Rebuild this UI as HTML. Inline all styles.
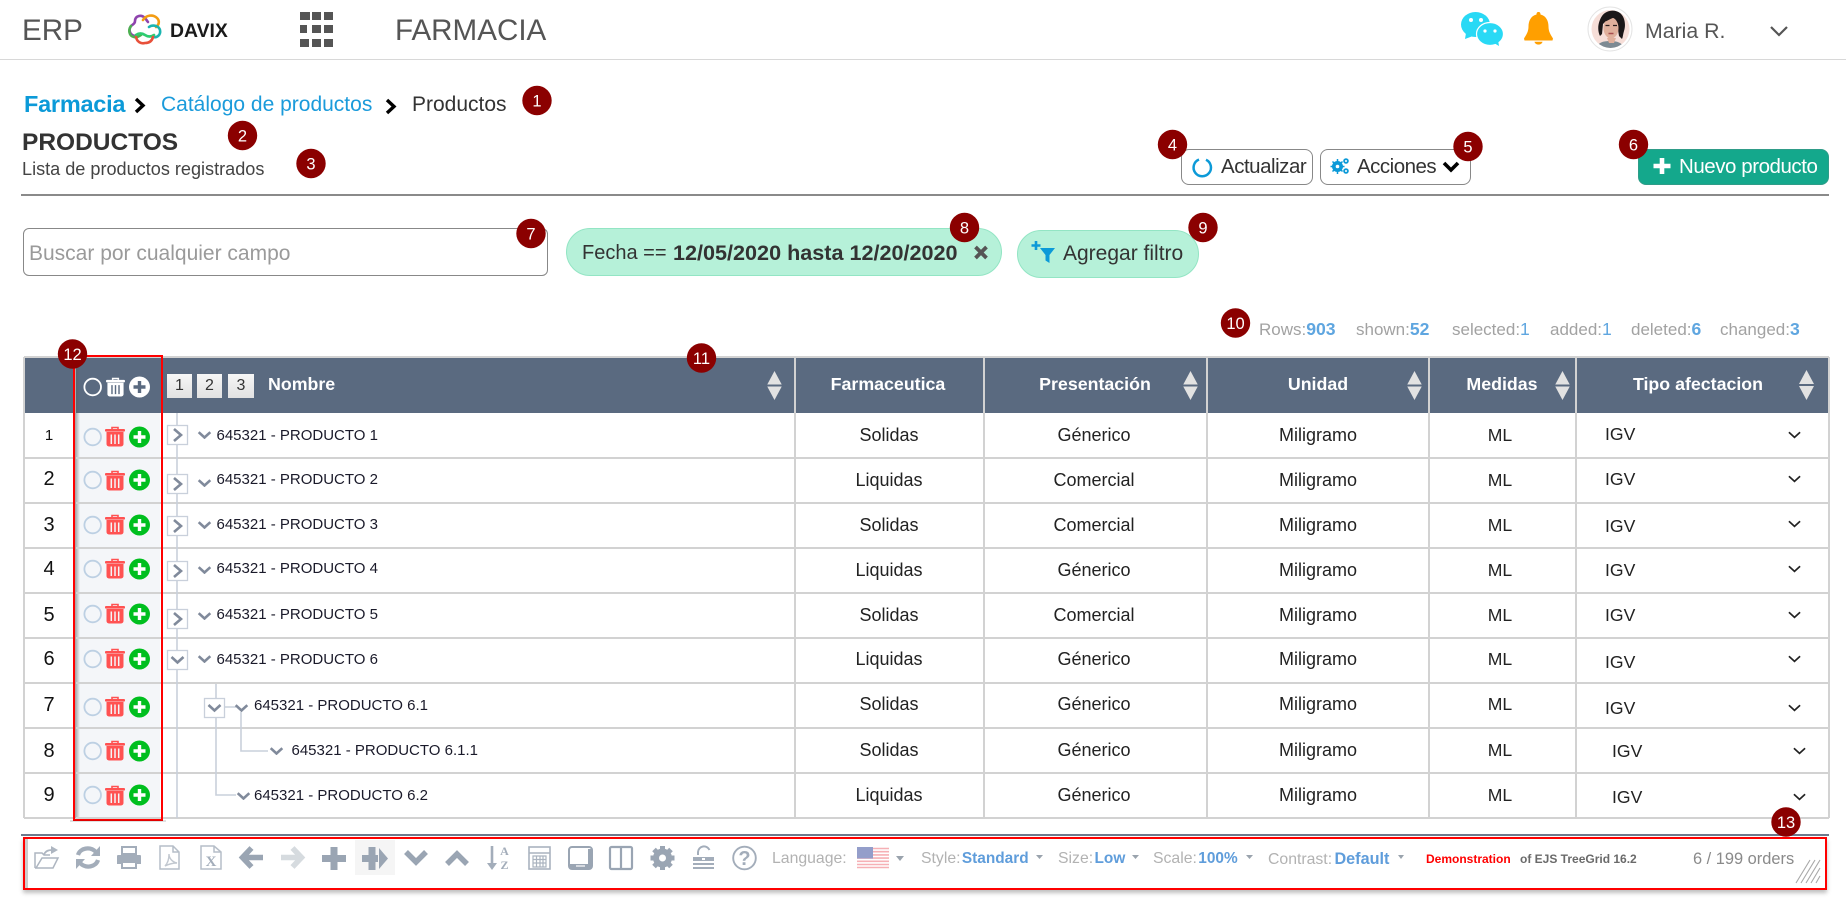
<!DOCTYPE html>
<html lang="es"><head><meta charset="utf-8"><title>Productos</title>
<style>
html,body{margin:0;padding:0;background:#fff}
#p{position:relative;width:1846px;height:898px;overflow:hidden;background:#fff;font-family:"Liberation Sans",sans-serif;color:#222}
.t{position:absolute;white-space:nowrap;line-height:20px;height:20px}
.n{width:60px;left:19px;text-align:center;font-size:20px;color:#111}
.f{width:180px;left:799px;text-align:center;font-size:18px;color:#222}
.g{width:200px;left:994px;text-align:center;font-size:18px;color:#222}
.u{width:200px;left:1218px;text-align:center;font-size:18px;color:#222}
.m{width:140px;left:1430px;text-align:center;font-size:17.6px;color:#222}
.i{left:1605px;font-size:17.6px;color:#222}
.r{font-size:15px;color:#1a1a2a}
.h{color:#fff;font-weight:bold;font-size:17.8px;text-align:center}
.b{position:absolute;box-sizing:border-box;top:149px;height:36px;border:1.3px solid #888;border-radius:8px;background:#fff}
.s{font-size:17px;color:#a2a2a2}
.s b{color:#5fa6e0;font-size:17.6px}
.l{font-size:15.8px;color:#b2b2b2}
.l b{color:#5f9ddb;font-size:15.4px}
svg{position:absolute;left:0;top:0}
</style></head><body><div id="p">

<div style="position:absolute;left:0;top:59px;width:1846px;height:1px;background:#d8d8d8"></div>
<div style="position:absolute;left:21px;top:194px;width:1808px;height:2px;background:#8a8a8a"></div>

<!-- buttons / inputs -->
<div class="b" style="left:1181px;width:132px"></div>
<div class="b" style="left:1320px;width:151px"></div>
<div class="b" style="left:1638px;width:191px;background:#14a88c;border-color:#2f9c88"></div>
<div style="position:absolute;box-sizing:border-box;left:23px;top:228px;width:525px;height:48px;border:1.4px solid #888;border-radius:6px"></div>
<div style="position:absolute;box-sizing:border-box;left:566px;top:228px;width:436px;height:48px;background:#b6f1d9;border:1.4px solid #93e5c4;border-radius:24px"></div>
<div style="position:absolute;box-sizing:border-box;left:1017px;top:230px;width:182px;height:48px;background:#b6f1d9;border:1.4px solid #93e5c4;border-radius:24px"></div>

<!-- table backgrounds -->
<div style="position:absolute;left:25px;top:358px;width:1803px;height:55px;background:#5a6a80"></div>
<div style="position:absolute;left:76px;top:413px;width:84px;height:405px;background:#f4f6f9"></div>
<div style="position:absolute;left:76px;top:358px;width:4px;height:460px;background:linear-gradient(90deg,rgba(90,90,90,.45),rgba(90,90,90,0))"></div>

<!-- toolbar -->
<div style="position:absolute;left:21px;top:834px;width:1808px;height:2px;background:#6d7a8c"></div>
<div style="position:absolute;box-sizing:border-box;left:23px;top:837px;width:1804px;height:53px;border:2px solid #f00;box-shadow:0 3px 4px rgba(0,0,0,.25);background:#fff"></div>
<div style="position:absolute;left:25px;top:839px;width:3px;height:49px;background:#ccc"></div>
<div style="position:absolute;left:355px;top:840px;width:40px;height:35px;background:#f5f5f5"></div>

<svg width="1846" height="898" viewBox="0 0 1846 898" xmlns="http://www.w3.org/2000/svg">
<defs>
<symbol id="tr" viewBox="0 0 20 20"><path d="M7 2.500V1h6v1.500" fill="none" stroke="currentColor" stroke-width="1.600"/><rect x="0" y="2.500" width="20" height="2.600" rx="1" fill="currentColor"/><path d="M1.500 5.500h17v12a2.500 2.500 0 0 1-2.500 2.500H4a2.500 2.500 0 0 1-2.500-2.500z" fill="currentColor"/><path d="M6.300 8v9.500M10 8v9.500M13.700 8v9.500" stroke="var(--s)" stroke-width="1.500"/></symbol>
<symbol id="cd" viewBox="0 0 14 8"><path d="M1.200 1.200L7 6.500l5.800-5.300" fill="none" stroke="#808a9b" stroke-width="2.600"/></symbol>
<symbol id="ch" viewBox="0 0 14 8"><path d="M1 1l6 5.600L13 1" fill="none" stroke="#222" stroke-width="1.800"/></symbol>
<symbol id="so" viewBox="0 0 15 30"><path d="M7.500 0L15 14H0zM0 16h15L7.500 30z" fill="#e2e2e2"/></symbol>
</defs>

<!-- grid -->
<g stroke="#d2d2d2" stroke-width="2" fill="none">
<path d="M24 357H1829M24 357V818M1829 357V818M24 818H1829"/>
<path d="M24 458H1829M24 503H1829M24 548H1829M24 593H1829M24 638H1829M24 683H1829M24 728H1829M24 773H1829"/>
<path d="M795 357V818M984 357V818M1207 357V818M1429 357V818M1576 357V818"/>
</g>
<path d="M75 358V818" stroke="#aaa" stroke-width="2"/>
<!-- tree lines -->
<g stroke="#c9d0db" stroke-width="1.600" fill="none">
<path d="M177 413V818M216 684V795H236M225 707H236M241 712V751H268"/>
</g>
<!-- expand boxes -->
<g fill="#fff" stroke="#c9d0db" stroke-width="1.300">
<rect x="167.500" y="425.500" width="20" height="19"/><rect x="167.500" y="474.500" width="20" height="19"/><rect x="167.500" y="516.500" width="20" height="19"/><rect x="167.500" y="561.500" width="20" height="19"/><rect x="167.500" y="609.500" width="20" height="19"/><rect x="167.500" y="650.500" width="20" height="19"/><rect x="204.500" y="698.500" width="20" height="19"/>
</g>
<g fill="none" stroke="#808a9b" stroke-width="2.600">
<path d="M174 429l7 6-7 6M174 478l7 6-7 6M174 520l7 6-7 6M174 565l7 6-7 6M174 613l7 6-7 6"/>
<path d="M171.500 657l6 5.500 6-5.500M208.500 705l6 5.500 6-5.500"/>
</g>
<!-- carets -->
<use href="#cd" x="197" y="431" width="15" height="8"/><use href="#cd" x="197" y="479" width="15" height="8"/><use href="#cd" x="197" y="521" width="15" height="8"/><use href="#cd" x="197" y="566" width="15" height="8"/><use href="#cd" x="197" y="612" width="15" height="8"/><use href="#cd" x="197" y="655" width="15" height="8"/><use href="#cd" x="234" y="704" width="15" height="8"/><use href="#cd" x="269" y="747" width="15" height="8"/><use href="#cd" x="236" y="792" width="15" height="8"/>
<!-- select chevrons -->
<use href="#ch" x="1788" y="431" width="13" height="8"/><use href="#ch" x="1788" y="475" width="13" height="8"/><use href="#ch" x="1788" y="520" width="13" height="8"/><use href="#ch" x="1788" y="565" width="13" height="8"/><use href="#ch" x="1788" y="611" width="13" height="8"/><use href="#ch" x="1788" y="655" width="13" height="8"/><use href="#ch" x="1788" y="704" width="13" height="8"/><use href="#ch" x="1793" y="747" width="13" height="8"/><use href="#ch" x="1793" y="793" width="13" height="8"/>
<!-- sort -->
<use href="#so" x="767" y="371" width="15" height="29"/><use href="#so" x="1183" y="371" width="15" height="29"/><use href="#so" x="1407" y="371" width="15" height="29"/><use href="#so" x="1555" y="371" width="15" height="29"/><use href="#so" x="1799" y="369" width="15" height="32"/>
<!-- header tree buttons -->
<defs><linearGradient id="bg" x1="0" y1="0" x2="0" y2="1"><stop offset="0" stop-color="#f6f6f6"/><stop offset="1" stop-color="#e2e2e2"/></linearGradient></defs>
<rect x="167" y="374" width="25" height="24" fill="url(#bg)"/><rect x="197" y="374" width="25" height="24" fill="url(#bg)"/><rect x="228" y="374" width="26" height="24" fill="url(#bg)"/>

<!-- col 2 icons: header -->
<circle cx="92.700" cy="387" r="8.300" fill="none" stroke="#fff" stroke-width="1.800"/>
<use href="#tr" x="106" y="377" width="19" height="20" style="color:#fff;--s:#5a6a80"/>
<circle cx="139.500" cy="387" r="10.500" fill="#fff"/><path d="M139.500 381v12M133.500 387h12" stroke="#5a6a80" stroke-width="3.400"/>
<!-- col 2 icons: rows -->
<g fill="none" stroke="#bdd0e3" stroke-width="1.800">
<circle cx="92.700" cy="437" r="8.300"/><circle cx="92.700" cy="480" r="8.300"/><circle cx="92.700" cy="525" r="8.300"/><circle cx="92.700" cy="569" r="8.300"/><circle cx="92.700" cy="614" r="8.300"/><circle cx="92.700" cy="659" r="8.300"/><circle cx="92.700" cy="707" r="8.300"/><circle cx="92.700" cy="751" r="8.300"/><circle cx="92.700" cy="795" r="8.300"/>
</g>
<g style="color:#ff5252;--s:#f4f6f9">
<use href="#tr" x="105" y="426" width="20" height="21"/><use href="#tr" x="105" y="470" width="20" height="21"/><use href="#tr" x="105" y="514" width="20" height="21"/><use href="#tr" x="105" y="558" width="20" height="21"/><use href="#tr" x="105" y="603" width="20" height="21"/><use href="#tr" x="105" y="648" width="20" height="21"/><use href="#tr" x="105" y="696" width="20" height="21"/><use href="#tr" x="105" y="740" width="20" height="21"/><use href="#tr" x="105" y="785" width="20" height="21"/>
</g>
<g fill="#00bf1f">
<circle cx="139.500" cy="437" r="10.500"/><circle cx="139.500" cy="480" r="10.500"/><circle cx="139.500" cy="525" r="10.500"/><circle cx="139.500" cy="569" r="10.500"/><circle cx="139.500" cy="614" r="10.500"/><circle cx="139.500" cy="659" r="10.500"/><circle cx="139.500" cy="707" r="10.500"/><circle cx="139.500" cy="751" r="10.500"/><circle cx="139.500" cy="795" r="10.500"/>
</g>
<path d="M139.500 431v12M133.500 437h12M139.500 474v12M133.500 480h12M139.500 519v12M133.500 525h12M139.500 563v12M133.500 569h12M139.500 608v12M133.500 614h12M139.500 653v12M133.500 659h12M139.500 701v12M133.500 707h12M139.500 745v12M133.500 751h12M139.500 789v12M133.500 795h12" stroke="#fff" stroke-width="3.400" fill="none"/>
<!-- red box 12 -->
<rect x="74" y="356" width="88" height="464" fill="none" stroke="#f00" stroke-width="2"/>
<path d="M70 821h96" stroke="#000" stroke-opacity=".12" stroke-width="2"/>

<!-- logo -->
<g fill="none" stroke-width="2.600" stroke-linecap="round">
<path d="M136 36c-6 0-8-6-5-10 2-2 4-2 4-5 0-5 6-7 10-3 1 1 2 3 3 4" stroke="#8e44ad"/>
<path d="M131 26c-3 4-2 10 3 11 3 1 5-1 7-2" stroke="#4cb050"/>
<path d="M143 20c3-5 10-6 14-2 3 3 2 7-1 9" stroke="#f39c12"/>
<path d="M149 27c4-3 10-1 11 3 1 5-3 8-7 7" stroke="#1ab5b0"/>
<path d="M136 35c3-2 6-2 9 0 3 2 6 2 9 0" stroke="#2ecc71"/>
<path d="M136 37c1 5 5 7 9 6 4 0 7-2 8-6" stroke="#e8503a"/>
</g>
<!-- apps grid -->
<g fill="#555">
<rect x="300" y="12" width="10" height="8"/><rect x="312" y="12" width="9" height="8"/><rect x="324" y="12" width="9" height="8"/>
<rect x="300" y="25" width="7" height="8"/><rect x="312" y="25" width="9" height="8"/><rect x="324" y="25" width="9" height="8"/>
<rect x="300" y="39" width="9" height="8"/><rect x="312" y="39" width="9" height="8"/><rect x="324" y="39" width="9" height="8"/>
</g>
<!-- chat -->
<ellipse cx="1475.500" cy="24.500" rx="14.500" ry="12.500" fill="#29d9f5"/><path d="M1466 33l-1 6 8-3z" fill="#29d9f5"/>
<ellipse cx="1490" cy="34" rx="13.500" ry="11.500" fill="#29d9f5" stroke="#fff" stroke-width="1.200"/><path d="M1494 43l5 3-1-6z" fill="#29d9f5"/>
<circle cx="1471" cy="20" r="2" fill="#fff"/><circle cx="1481" cy="20" r="2" fill="#fff"/><circle cx="1485" cy="31" r="1.600" fill="#fff"/><circle cx="1495" cy="31" r="1.600" fill="#fff"/>
<!-- bell -->
<path d="M1538.500 12c1.500 0 2 1 2 2.500 6 1.500 8 7 8 12 0 5 2 8 4.500 12l-.5 2h-28l-.5-2c2.500-4 4.500-7 4.500-12 0-5 2-10.500 8-12 0-1.500.5-2.500 2-2.500z" fill="#ff9f00"/>
<path d="M1534 41.500c1 4.500 8 4.500 9 0z" fill="#ff9f00" stroke="#fff" stroke-width=".6"/>
<!-- avatar -->
<circle cx="1610" cy="29" r="22" fill="#fff" stroke="#e4e4e4" stroke-width="1"/>
<clipPath id="av"><circle cx="1610.500" cy="29" r="19"/></clipPath>
<g clip-path="url(#av)">
<rect x="1590" y="9" width="42" height="40" fill="#f6ded8"/>
<path d="M1596 50c1-7 6-9 14-9s13 2 15 9z" fill="#7d8a93"/>
<path d="M1600 36c-3-6-2-14 2-20 4-6 13-7 18-3 5 4 6 12 4 18-1 3-1 6-2 8l-3-3-2-13-9-4-5 5-1 10z" fill="#1b1718"/>
<ellipse cx="1611" cy="28" rx="7.500" ry="10.500" fill="#e0b09c"/>
<path d="M1604 22c3-1 8-4 11-5l3 6-1-5-7-1-6 3z" fill="#1b1718"/>
<path d="M1605.500 25.500h4M1613 25.500h4" stroke="#2a1d1d" stroke-width="1.300"/>
<path d="M1608.500 33.500h5" stroke="#a84f50" stroke-width="1.600"/>
<path d="M1607 38l2 5h5l2-5z" fill="#e0b09c"/>
</g>
<path d="M1771 27l8 8 8-8" fill="none" stroke="#555" stroke-width="2.200"/>

<!-- breadcrumb chevrons -->
<path d="M136 99l7 6.500-7 6.500M387 100l7 6.500-7 6.500" fill="none" stroke="#000" stroke-width="3.400"/>
<!-- button icons -->
<path d="M1199 159.500a8.700 8.700 0 1 0 7 .2" fill="none" stroke="#0c9ad8" stroke-width="2.500"/>
<g fill="#0c9ad8"><circle cx="1337.500" cy="166.500" r="5.500"/><circle cx="1346" cy="161" r="2.800"/><circle cx="1346" cy="171" r="2.800"/></g>
<circle cx="1337.500" cy="166.500" r="2" fill="#fff"/><circle cx="1346" cy="161" r="1" fill="#fff"/><circle cx="1346" cy="171" r="1" fill="#fff"/>
<path d="M1337.500 159v15M1330.500 166.500h14M1332.500 161.500l10 10M1342.500 161.500l-10 10" stroke="#0c9ad8" stroke-width="1.500"/>
<circle cx="1337.500" cy="166.500" r="1.800" fill="#fff"/>
<path d="M1444 163l7 7 7-7" fill="none" stroke="#000" stroke-width="3.600"/>
<path d="M1662 158v16M1653.500 166h17" stroke="#fff" stroke-width="4.600"/>
<!-- filter pill icons -->
<path d="M975.500 247l11 11M986.500 247l-11 11" stroke="#555" stroke-width="3.800"/>
<path d="M1036 241v9M1031.500 245.500h9" stroke="#0c9ad8" stroke-width="2.600"/>
<path d="M1040 248h15l-5.500 7v8l-4-2.500v-5.500z" fill="#0c9ad8"/>

<!-- toolbar icons -->
<g fill="none" stroke="#aeb6c1" stroke-width="1.500">
<path d="M35 868v-15h7l2 2h6M35 868h18l5-10H42l-6 10"/>
<path d="M44 855c1-4 4-5 8-5" stroke-width="1.800"/>
</g>
<path d="M51 846l7 4-7 4z" fill="#aeb6c1"/>
<g fill="none" stroke="#a3adba" stroke-width="4.200">
<path d="M78 855c2-7 12-9 18-3M98 860c-2 7-12 9-18 3"/>
</g>
<path d="M100 846v10h-9zM76 869v-10h9z" fill="#a3adba"/>
<path d="M122 847h14v7h-14z" fill="none" stroke="#a3adba" stroke-width="2"/>
<path d="M118 855h22a1 1 0 0 1 1 1v8h-5v-3h-14v3h-5v-8a1 1 0 0 1 1-1z" fill="#a3adba"/>
<path d="M122 862h14v6h-14z" fill="#fff" stroke="#a3adba" stroke-width="2"/>
<g fill="none" stroke="#b6bec8" stroke-width="1.500">
<path d="M160 846h13l6 6v17h-19zM173 846v6h6"/>
<path d="M201 846h13l7 6v17h-20zM214 846v6h7"/>
</g>
<path d="M165 866c3-3 4-8 4-12 0 4 3 8 8 9-4 0-8 1-12 3z" fill="none" stroke="#c2c8d0" stroke-width="1.400"/>
<text x="211" y="866" text-anchor="middle" font-family="Liberation Serif" font-size="15" font-weight="bold" fill="#a3adba">X</text>
<path d="M251.500 848l-9 9.500 9 9.500M244 857.500h19" fill="none" stroke="#9aa5b3" stroke-width="5.500"/>
<path d="M292.500 848l9 9.500-9 9.500M300 857.500h-19" fill="none" stroke="#d6dbdf" stroke-width="5.500"/>
<path d="M334 847v23M322 858.500h24" stroke="#9aa5b3" stroke-width="7"/>
<path d="M372 847v23M362 858.500h16" stroke="#9aa5b3" stroke-width="7"/><path d="M379 848l9 10.500-9 10.500z" fill="#9aa5b3"/>
<path d="M406 852l10 10 10-10" fill="none" stroke="#9aa5b3" stroke-width="5.500"/>
<path d="M447 864l10-10 10 10" fill="none" stroke="#9aa5b3" stroke-width="5.500"/>
<path d="M492 846v20" stroke="#a3adba" stroke-width="2.600"/><path d="M487 863h10l-5 7z" fill="#a3adba"/>
<text x="504.500" y="855" text-anchor="middle" font-family="Liberation Serif" font-size="12" font-weight="bold" fill="#a3adba">A</text>
<text x="504.500" y="869" text-anchor="middle" font-family="Liberation Serif" font-size="12" font-weight="bold" fill="#a3adba">Z</text>
<rect x="529" y="847" width="21" height="22" fill="none" stroke="#aab3bf" stroke-width="1.600"/>
<path d="M529 853h21" stroke="#aab3bf" stroke-width="1.600"/>
<path d="M533 856h13v11h-13zM533 859.500h13M533 863h13M536.500 856v11M540 856v11M543 856v11" fill="none" stroke="#aab3bf" stroke-width="1.200"/>
<rect x="569" y="847" width="23" height="22" rx="3" fill="none" stroke="#9aa5b3" stroke-width="2"/>
<path d="M569 864h23v3a2 2 0 0 1-2 2h-19a2 2 0 0 1-2-2z" fill="#9aa5b3"/><path d="M588 849h3v15h-3z" fill="#9aa5b3"/><path d="M576 866h9" stroke="#fff" stroke-width="1.200"/>
<rect x="610" y="847" width="22" height="22" rx="1.500" fill="none" stroke="#9aa5b3" stroke-width="2.200"/><path d="M621 847v22" stroke="#9aa5b3" stroke-width="2.200"/>
<circle cx="662.500" cy="858" r="6.500" fill="none" stroke="#9aa5b3" stroke-width="6"/>
<path d="M662.500 846v5M662.500 865v5M650.500 858h5M669.500 858h5M654 849.500l3.500 3.500M667.500 863l3.500 3.500M671 849.500l-3.500 3.500M657.500 863l-3.500 3.500" stroke="#9aa5b3" stroke-width="5"/>
<path d="M698 855v-3a6 6 0 0 1 11.500-2" fill="none" stroke="#a3adba" stroke-width="2"/>
<path d="M693 857h21v4h-21zM693 863h21v2h-21zM693 867h21v2h-21z" fill="#a3adba"/><path d="M702 858h3v2h-3z" fill="#fff"/>
<circle cx="744.500" cy="858" r="11.300" fill="none" stroke="#a3adba" stroke-width="1.900"/>
<text x="744.500" y="865" text-anchor="middle" font-family="Liberation Sans" font-size="20" font-weight="bold" fill="#a3adba">?</text>
<!-- flag -->
<g opacity=".55">
<rect x="857" y="847" width="32" height="21" fill="#fff"/>
<path d="M857 848.500h32M857 851.700h32M857 854.900h32M857 858.100h32M857 861.300h32M857 864.500h32M857 867.500h32" stroke="#f0707a" stroke-width="1.600"/>
<rect x="857" y="847" width="16" height="11.500" fill="#3d4f9f"/>
</g>
<g fill="#9aa3ad">
<path d="M896 856h8l-4 5zM1036 855h7l-3.500 4zM1132 855h7l-3.500 4zM1246 855h7l-3.500 4zM1398 855h6l-3 4z"/>
</g>
<path d="M1796 883l14-23M1801 883l14-23M1806 883l14-23M1811 883l9-15M1816 883l4-7" stroke="#a8a8a8" stroke-width="1.100"/>

<!-- badges -->
<g fill="#8b0000">
<circle cx="537" cy="100.500" r="14.700"/><circle cx="242.500" cy="135.500" r="14.700"/><circle cx="311" cy="163.500" r="14.700"/><circle cx="1172.500" cy="144.500" r="14.700"/><circle cx="1468" cy="146.500" r="14.700"/><circle cx="1633.500" cy="144.500" r="14.700"/><circle cx="531" cy="233.500" r="14.700"/><circle cx="964.500" cy="227.500" r="14.700"/><circle cx="1203" cy="227.500" r="14.700"/><circle cx="1235.500" cy="323" r="14.700"/><circle cx="701.500" cy="358" r="14.700"/><circle cx="72.500" cy="354" r="14.700"/><circle cx="1786" cy="822" r="14.700"/>
</g>
<g fill="#fff" font-family="Liberation Sans" font-size="16.500" text-anchor="middle">
<text x="537" y="106.500">1</text><text x="242.500" y="141.500">2</text><text x="311" y="169.500">3</text><text x="1172.500" y="150.500">4</text><text x="1468" y="152.500">5</text><text x="1633.500" y="150.500">6</text><text x="531" y="239.500">7</text><text x="964.500" y="233.500">8</text><text x="1203" y="233.500">9</text><text x="1235.500" y="329">10</text><text x="701.500" y="364">11</text><text x="72.500" y="360">12</text><text x="1786" y="828">13</text>
</g>
</svg>

<!-- header text -->
<span class="t" style="left:22px;top:21px;font-size:29.6px;color:#555">ERP</span>
<span class="t" style="left:170px;top:21px;font-size:19.4px;font-weight:bold;color:#1a1a1a">DAVIX</span>
<span class="t" style="left:395px;top:21px;font-size:29.6px;color:#555">FARMACIA</span>
<span class="t" style="left:1645px;top:21px;font-size:21.3px;color:#555">Maria R.</span>

<span class="t" style="left:24px;top:94px;font-size:23.5px;letter-spacing:-.25px;font-weight:bold;color:#0c9ad8">Farmacia</span>
<span class="t" style="left:161px;top:95px;font-size:21px;color:#1b9bdb">Catálogo de productos</span>
<span class="t" style="left:412px;top:95px;font-size:21px;color:#333">Productos</span>
<span class="t" style="left:22px;top:133px;font-size:24.5px;font-weight:bold;color:#333">PRODUCTOS</span>
<span class="t" style="left:22px;top:159px;font-size:18.1px;color:#444">Lista de productos registrados</span>

<span class="t" style="left:1221px;top:157px;font-size:20.5px;letter-spacing:-.48px;color:#333">Actualizar</span>
<span class="t" style="left:1357px;top:157px;font-size:20.5px;letter-spacing:-.5px;color:#333">Acciones</span>
<span class="t" style="left:1679px;top:157px;font-size:20.5px;letter-spacing:-.45px;color:#fff">Nuevo producto</span>

<span class="t" style="left:29px;top:244px;font-size:21px;color:#9a9a9a">Buscar por cualquier campo</span>
<span class="t" style="left:582px;top:243px;font-size:20px;color:#333">Fecha ==</span>
<span class="t" style="left:673px;top:243px;font-size:21.6px;font-weight:bold;color:#333">12/05/2020 hasta 12/20/2020</span>
<span class="t" style="left:1063px;top:244px;font-size:21px;color:#333">Agregar filtro</span>

<span class="t s" style="left:1259px;top:319px">Rows:<b>903</b></span>
<span class="t s" style="left:1356px;top:319px">shown:<b>52</b></span>
<span class="t s" style="left:1452px;top:319px">selected:<b style="font-weight:normal">1</b></span>
<span class="t s" style="left:1550px;top:319px">added:<b style="font-weight:normal">1</b></span>
<span class="t s" style="left:1631px;top:319px">deleted:<b>6</b></span>
<span class="t s" style="left:1720px;top:319px">changed:<b>3</b></span>

<!-- table head -->
<span class="t" style="left:167px;top:376px;width:25px;text-align:center;font-size:16px;color:#333">1</span>
<span class="t" style="left:197px;top:376px;width:25px;text-align:center;font-size:16px;color:#333">2</span>
<span class="t" style="left:228px;top:376px;width:26px;text-align:center;font-size:16px;color:#333">3</span>
<span class="t h" style="left:268px;top:374px">Nombre</span>
<span class="t h" style="left:798px;width:180px;top:374px">Farmaceutica</span>
<span class="t h" style="left:995px;width:200px;top:374px">Presentación</span>
<span class="t h" style="left:1218px;width:200px;top:374px">Unidad</span>
<span class="t h" style="left:1432px;width:140px;top:374px">Medidas</span>
<span class="t h" style="left:1598px;width:200px;top:374px">Tipo afectacion</span>

<!-- row numbers -->
<span class="t n" style="top:426px;font-size:15px">1</span>
<span class="t n" style="top:469px">2</span>
<span class="t n" style="top:515px">3</span>
<span class="t n" style="top:559px">4</span>
<span class="t n" style="top:605px">5</span>
<span class="t n" style="top:649px">6</span>
<span class="t n" style="top:695px">7</span>
<span class="t n" style="top:741px">8</span>
<span class="t n" style="top:785px">9</span>

<!-- tree names -->
<span class="t r" style="left:216.5px;top:426px">645321 - PRODUCTO 1</span>
<span class="t r" style="left:216.5px;top:470px">645321 - PRODUCTO 2</span>
<span class="t r" style="left:216.5px;top:515px">645321 - PRODUCTO 3</span>
<span class="t r" style="left:216.5px;top:559px">645321 - PRODUCTO 4</span>
<span class="t r" style="left:216.5px;top:605px">645321 - PRODUCTO 5</span>
<span class="t r" style="left:216.5px;top:650px">645321 - PRODUCTO 6</span>
<span class="t r" style="left:254px;top:696px">645321 - PRODUCTO 6.1</span>
<span class="t r" style="left:291.5px;top:741px">645321 - PRODUCTO 6.1.1</span>
<span class="t r" style="left:254px;top:786px">645321 - PRODUCTO 6.2</span>

<!-- Farmaceutica -->
<span class="t f" style="top:425px">Solidas</span>
<span class="t f" style="top:470px">Liquidas</span>
<span class="t f" style="top:515px">Solidas</span>
<span class="t f" style="top:560px">Liquidas</span>
<span class="t f" style="top:605px">Solidas</span>
<span class="t f" style="top:649px">Liquidas</span>
<span class="t f" style="top:694px">Solidas</span>
<span class="t f" style="top:740px">Solidas</span>
<span class="t f" style="top:785px">Liquidas</span>
<!-- Presentacion -->
<span class="t g" style="top:425px">Génerico</span>
<span class="t g" style="top:470px">Comercial</span>
<span class="t g" style="top:515px">Comercial</span>
<span class="t g" style="top:560px">Génerico</span>
<span class="t g" style="top:605px">Comercial</span>
<span class="t g" style="top:649px">Génerico</span>
<span class="t g" style="top:694px">Génerico</span>
<span class="t g" style="top:740px">Génerico</span>
<span class="t g" style="top:785px">Génerico</span>
<!-- Unidad -->
<span class="t u" style="top:425px">Miligramo</span>
<span class="t u" style="top:470px">Miligramo</span>
<span class="t u" style="top:515px">Miligramo</span>
<span class="t u" style="top:560px">Miligramo</span>
<span class="t u" style="top:605px">Miligramo</span>
<span class="t u" style="top:649px">Miligramo</span>
<span class="t u" style="top:694px">Miligramo</span>
<span class="t u" style="top:740px">Miligramo</span>
<span class="t u" style="top:785px">Miligramo</span>
<!-- Medidas -->
<span class="t m" style="top:425px">ML</span>
<span class="t m" style="top:470px">ML</span>
<span class="t m" style="top:515px">ML</span>
<span class="t m" style="top:560px">ML</span>
<span class="t m" style="top:605px">ML</span>
<span class="t m" style="top:649px">ML</span>
<span class="t m" style="top:694px">ML</span>
<span class="t m" style="top:740px">ML</span>
<span class="t m" style="top:785px">ML</span>
<!-- Tipo -->
<span class="t i" style="top:424px">IGV</span>
<span class="t i" style="top:469px">IGV</span>
<span class="t i" style="top:516px">IGV</span>
<span class="t i" style="top:560px">IGV</span>
<span class="t i" style="top:605px">IGV</span>
<span class="t i" style="top:652px">IGV</span>
<span class="t i" style="top:698px">IGV</span>
<span class="t i" style="top:741px;left:1612px">IGV</span>
<span class="t i" style="top:787px;left:1612px">IGV</span>

<!-- toolbar text -->
<span class="t l" style="left:772px;top:849px">Language:</span>
<span class="t l" style="left:921px;top:849px">Style: <b style="margin-left:-3px">Standard</b></span>
<span class="t l" style="left:1058px;top:849px">Size: <b style="margin-left:-3px">Low</b></span>
<span class="t l" style="left:1153px;top:849px">Scale: <b style="margin-left:-3px">100%</b></span>
<span class="t l" style="left:1268px;top:849px">Contrast: <b style="margin-left:-2px;font-size:16.2px">Default</b></span>
<span class="t" style="left:1426px;top:849px;font-size:12px;font-weight:bold;color:#f00">Demonstration</span>
<span class="t" style="left:1520px;top:849px;font-size:12px;font-weight:bold;color:#6a6a6a">of EJS TreeGrid 16.2</span>
<span class="t" style="left:1693px;top:849px;font-size:16.4px;color:#8a8a8a">6 / 199 orders</span>
</div></body></html>
